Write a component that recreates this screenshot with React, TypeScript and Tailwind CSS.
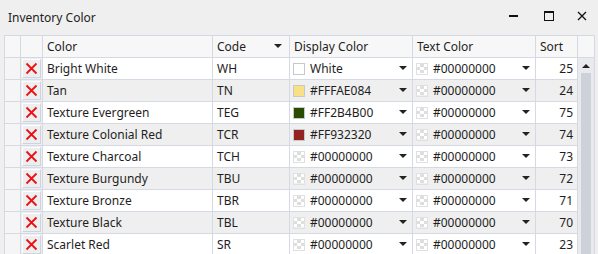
import React from "react";

type Row = { name: string; code: string; disp: string; sw: string | null; sort: number };

const rows: Row[] = [
  { name: "Bright White", code: "WH", disp: "White", sw: "#ffffff", sort: 25 },
  { name: "Tan", code: "TN", disp: "#FFFAE084", sw: "#fae084", sort: 24 },
  { name: "Texture Evergreen", code: "TEG", disp: "#FF2B4B00", sw: "#2b4b00", sort: 75 },
  { name: "Texture Colonial Red", code: "TCR", disp: "#FF932320", sw: "#932320", sort: 74 },
  { name: "Texture Charcoal", code: "TCH", disp: "#00000000", sw: null, sort: 73 },
  { name: "Texture Burgundy", code: "TBU", disp: "#00000000", sw: null, sort: 72 },
  { name: "Texture Bronze", code: "TBR", disp: "#00000000", sw: null, sort: 71 },
  { name: "Texture Black", code: "TBL", disp: "#00000000", sw: null, sort: 70 },
  { name: "Scarlet Red", code: "SR", disp: "#00000000", sw: null, sort: 23 },
];

function Swatch({ c }: { c: string | null }) {
  if (c) {
    return <div className="w-[12px] h-[12px] shrink-0 border border-[#c8c8c8]" style={{ background: c }} />;
  }
  return (
    <div className="w-[12px] h-[12px] shrink-0 border border-[#e0e0e0] grid grid-cols-3 grid-rows-3">
      {[0, 1, 2, 3, 4, 5, 6, 7, 8].map((i) => (
        <div key={i} className={i % 2 === 0 ? "bg-[#ffffff]" : "bg-[#dedede]"} />
      ))}
    </div>
  );
}

function Caret() {
  return (
    <svg width="8" height="5" viewBox="0 0 8 5" className="shrink-0">
      <path d="M0 0 L8 0 L4 4 Z" fill="#222" />
    </svg>
  );
}

function RedX() {
  return (
    <svg width="13" height="13" viewBox="0 0 13 13">
      <path d="M1.5 1.5 L11.5 11.5 M11.5 1.5 L1.5 11.5" stroke="#ee1111" strokeWidth="1.8" />
    </svg>
  );
}

const border = "border-r border-b border-[#d5d9e3]";

export default function App() {
  return (
    <div
      className="w-[598px] h-[254px] bg-[#efefef] overflow-hidden text-[12px] text-[#1e1e1e]"
      style={{ fontFamily: '"Noto Sans", "Open Sans", sans-serif' }}
    >
      <div className="h-[35px] flex items-center justify-between pl-[8px]">
        <div className="text-[12px] text-[#222]">Inventory Color</div>
        <div className="flex items-center h-full">
          <div className="w-[38px] h-full flex items-center justify-center -mt-[4px]">
            <div className="w-[9px] h-[2px] bg-[#111]" />
          </div>
          <div className="w-[34px] h-full flex items-center justify-center -mt-[4px]">
            <div className="w-[10px] h-[10px] border border-[#111] border-t-[2px]" />
          </div>
          <div className="w-[32px] h-full flex items-center justify-center -mt-[4px]">
            <svg width="10" height="10" viewBox="0 0 10 10">
              <path d="M1 1 L9 9 M9 1 L1 9" stroke="#111" strokeWidth="1.3" />
            </svg>
          </div>
        </div>
      </div>
      <div className="ml-[4px] w-[591px] border-l border-t border-[#d5d9e3] bg-white flex">
        <div className="flex flex-col">
          <div className="flex h-[22px] bg-[#f7f7f7]">
            <div className={`w-[16px] ${border}`} />
            <div className={`w-[22px] ${border}`} />
            <div className={`w-[170px] ${border} flex items-center pl-[4px]`}>Color</div>
            <div className={`w-[77px] ${border} flex items-center justify-between pl-[4px] pr-[7px]`}>
              <span>Code</span>
              <Caret />
            </div>
            <div className={`w-[123px] ${border} flex items-center pl-[4px]`}>Display Color</div>
            <div className={`w-[123px] ${border} flex items-center pl-[4px]`}>Text Color</div>
            <div className={`w-[42px] ${border} flex items-center pl-[4px]`}>Sort</div>
          </div>
          {rows.map((r, i) => {
            const bg = i % 2 === 1 ? "bg-[#efefef]" : "bg-white";
            return (
              <div key={r.code} className={`flex h-[22px] ${bg}`}>
                <div className={`w-[16px] ${border} bg-[#f5f5f5]`} />
                <div className={`w-[22px] ${border} bg-[#eceef2] flex items-center justify-center`}>
                  <div className="w-[19px] h-[19px] border border-white border-r-[#cfd3dc] border-b-[#cfd3dc] flex items-center justify-center">
                    <RedX />
                  </div>
                </div>
                <div className={`w-[170px] ${border} flex items-center pl-[4px]`}>{r.name}</div>
                <div className={`w-[77px] ${border} flex items-center pl-[4px]`}>{r.code}</div>
                <div className={`w-[123px] ${border} flex items-center pl-[3px] pr-[5px] gap-[5px]`}>
                  <Swatch c={r.sw} />
                  <span className="flex-1">{r.disp}</span>
                  <Caret />
                </div>
                <div className={`w-[123px] ${border} flex items-center pl-[3px] pr-[5px] gap-[5px]`}>
                  <Swatch c={null} />
                  <span className="flex-1">#00000000</span>
                  <Caret />
                </div>
                <div className={`w-[42px] ${border} flex items-center justify-end pr-[4px]`}>{r.sort}</div>
              </div>
            );
          })}
        </div>
        <div className="w-[18px] flex flex-col">
          <div className="h-[22px] border-b border-r border-[#d5d9e3] bg-[#f7f7f7]" />
          <div className="flex-1 bg-[#e9eaee] border-r border-[#d5d9e3] flex flex-col items-center pt-[6px]">
            <svg width="8" height="5" viewBox="0 0 8 5">
              <path d="M0 4 L8 4 L4 0 Z" fill="#222" />
            </svg>
            <div className="mt-[4px] w-[10px] flex-1 bg-[#cdd1da]" />
          </div>
        </div>
      </div>
    </div>
  );
}
